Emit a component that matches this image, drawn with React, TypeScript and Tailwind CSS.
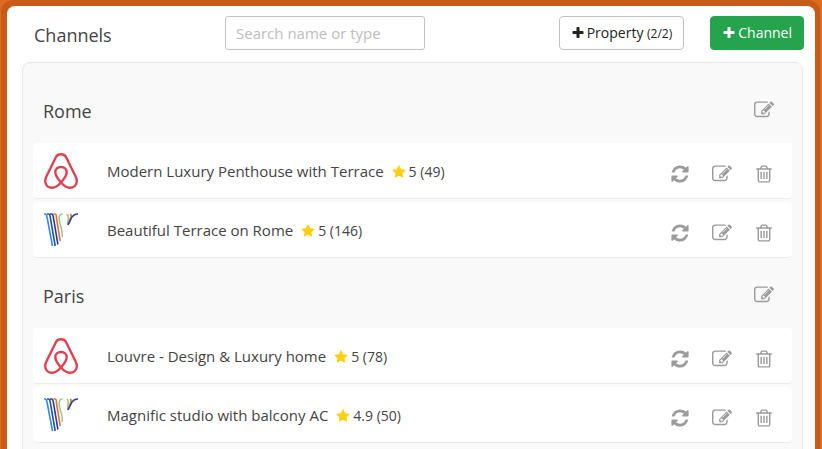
import type { ReactNode } from "react";

const glyphs = {
  plus: "M1600 736v192q0 40-28 68t-68 28h-416v416q0 40-28 68t-68 28h-192q-40 0-68-28t-28-68v-416h-416q-40 0-68-28t-28-68v-192q0-40 28-68t68-28h416v-416q0-40 28-68t68-28h192q40 0 68 28t28 68v416h416q40 0 68 28t28 68z",
  star: "M1728 647q0 22-26 48l-363 354 86 500q1 7 1 20 0 21-10.500 35.500t-30.500 14.500q-19 0-40-12l-449-236-449 236q-22 12-40 12-21 0-31.500-14.500t-10.500-35.500q0-6 2-20l86-500-364-354q-25-27-25-48 0-37 56-46l502-73 225-455q19-41 49-41t49 41l225 455 502 73q56 9 56 46z",
  refresh:
    "M1639 1056q0 5-1 7-64 268-268 434.500t-478 166.500q-146 0-282.500-55t-243.500-157l-129 129q-19 19-45 19t-45-19-19-45v-448q0-26 19-45t45-19h448q26 0 45 19t19 45-19 45l-137 137q71 66 161 102t187 36q134 0 250-65t186-179q11-17 53-117 8-23 30-23h192q13 0 22.500 9.500t9.500 22.500zm25-800v448q0 26-19 45t-45 19h-448q-26 0-45-19t-19-45 19-45l138-138q-148-137-349-137-134 0-250 65t-186 179q-11 17-53 117-8 23-30 23h-199q-13 0-22.500-9.500t-9.500-22.500v-7q65-268 270-434.500t480-166.500q146 0 284 55.500t245 156.500l130-129q19-19 45-19t45 19 19 45z",
  edit: "M888 1184l116-116-152-152-116 116v56h96v96h56zm440-720q-16-16-33 1l-350 350q-17 17-1 33t33-1l350-350q17-17 1-33zm80 594v190q0 119-84.500 203.500t-203.500 84.500h-832q-119 0-203.500-84.500t-84.500-203.500v-832q0-119 84.500-203.500t203.500-84.500h832q63 0 117 25 15 7 18 23 3 17-9 29l-49 49q-14 14-32 8-23-6-45-6h-832q-66 0-113 47t-47 113v832q0 66 47 113t113 47h832q66 0 113-47t47-113v-126q0-13 9-22l64-64q15-15 35-7t20 29zm-96-738l288 288-672 672h-288v-288zm444 132l-92 92-288-288 92-92q28-28 68-28t68 28l152 152q28 28 28 68t-28 68z",
  trash:
    "M704 736v576q0 14-9 23t-23 9h-64q-14 0-23-9t-9-23v-576q0-14 9-23t23-9h64q14 0 23 9t9 23zm256 0v576q0 14-9 23t-23 9h-64q-14 0-23-9t-9-23v-576q0-14 9-23t23-9h64q14 0 23 9t9 23zm256 0v576q0 14-9 23t-23 9h-64q-14 0-23-9t-9-23v-576q0-14 9-23t23-9h64q14 0 23 9t9 23zm128 724v-948h-896v948q0 22 7 40.500t14.500 27 10.500 8.500h832q3 0 10.500-8.500t14.500-27 7-40.500zm-672-1076h448l-48-117q-7-9-17-11h-317q-10 2-17 11zm928 32v64q0 14-9 23t-23 9h-96v948q0 83-47 143.500t-113 60.500h-832q-66 0-113-58.500t-47-141.500v-952h-96q-14 0-23-9t-9-23v-64q0-14 9-23t23-9h309l70-167q15-37 54-63t79-26h320q40 0 79 26t54 63l70 167h309q14 0 23 9t9 23z",
};

function Glyph({ name, className }: { name: keyof typeof glyphs; className: string }) {
  return (
    <svg viewBox="0 0 1792 1792" fill="currentColor" aria-hidden="true" className={className}>
      <path d={glyphs[name]} />
    </svg>
  );
}

function AirbnbLogo() {
  return (
    <svg viewBox="0 0 34 36" fill="none" stroke="#e04150" strokeWidth="2.4" aria-hidden="true" className="h-9 w-[34px]">
      <path d="M17 29.500C13 25 11.300 22 11.300 19.300C11.300 16 13.700 14 17 14s5.700 2 5.700 5.300C22.700 22 21 25 17 29.500C13.500 33.300 11 34.800 8.300 34.800C4 34.800 1.200 32 1.200 28C1.200 26.500 1.700 25 2.500 23.300L12 4C13 2.200 14.600 1.300 17 1.300s4 .9 5 2.700L31.500 23.300C32.300 25 32.800 26.500 32.800 28C32.800 32 30 34.800 25.700 34.800C23 34.800 20.500 33.300 17 29.500z" />
    </svg>
  );
}

function VrboLogo() {
  return (
    <svg viewBox="0 0 34 34" fill="none" strokeWidth="1.6" aria-hidden="true" className="h-[34px] w-[34px]">
      <path d="M0 1h1Q2.500 1 3 4L8.500 33" stroke="#3488ea" />
      <path d="M3 1h1.500Q5.800 1 6.200 4L11.200 33" stroke="#2350a0" />
      <path d="M6 1h1.500Q8.900 1 9.300 4L13.900 31.500" stroke="#22408f" />
      <path d="M9.500 1h1.500Q12.400 1 12.300 4L16.200 28" stroke="#f06a3c" />
      <path d="M18.500 1Q14.900 1 15.100 6Q15.500 10 17 14T18.200 24" stroke="#93cc8c" />
      <path d="M22.500 1.200q2.300.3 1.700 4.800l-.6 5" stroke="#93cc8c" />
      <path d="M26 1.200q1.800.5.800 3.300L24 12" stroke="#ee6338" />
      <path d="M34 1Q30 1 28 4L24 12" stroke="#2b4a96" />
    </svg>
  );
}

function IconButton({ label, children }: { label: string; children: ReactNode }) {
  return (
    <button type="button" aria-label={label} className="h-5 w-5 text-[#9b9b9b]">
      {children}
    </button>
  );
}

type Listing = { site: "airbnb" | "vrbo"; name: string; rating: string; reviews: number };

const properties: { city: string; listings: Listing[] }[] = [
  {
    city: "Rome",
    listings: [
      { site: "airbnb", name: "Modern Luxury Penthouse with Terrace", rating: "5", reviews: 49 },
      { site: "vrbo", name: "Beautiful Terrace on Rome", rating: "5", reviews: 146 },
    ],
  },
  {
    city: "Paris",
    listings: [
      { site: "airbnb", name: "Louvre - Design & Luxury home", rating: "5", reviews: 78 },
      { site: "vrbo", name: "Magnific studio with balcony AC", rating: "4.9", reviews: 50 },
    ],
  },
];

function ListingRow({ site, name, rating, reviews }: Listing) {
  return (
    <li className="flex h-14 items-center rounded-sm border-b border-[#ebebeb] bg-white pr-[18px] pl-[11px]">
      <span className="flex w-[63px] shrink-0">{site === "airbnb" ? <AirbnbLogo /> : <VrboLogo />}</span>
      <p className="flex grow items-baseline pt-[2px] text-[15px] leading-5">
        {name}
        <Glyph name="star" className="mr-[3px] ml-2 h-[14px] w-[14px] self-center text-[#ffcf0a]" />
        <span className="text-sm leading-5">
          {rating} ({reviews})
        </span>
      </p>
      <div className="flex gap-[22px] pt-[6px]">
        <IconButton label={`Refresh ${name}`}>
          <Glyph name="refresh" className="h-5 w-5" />
        </IconButton>
        <IconButton label={`Edit ${name}`}>
          <Glyph name="edit" className="h-5 w-5" />
        </IconButton>
        <IconButton label={`Delete ${name}`}>
          <Glyph name="trash" className="h-5 w-5" />
        </IconButton>
      </div>
    </li>
  );
}

export default function App() {
  return (
    <div className="h-screen overflow-hidden bg-[#e06b1f] font-['Open_Sans',sans-serif] text-[#444]">
      <div className="mr-[2px] ml-px rounded-t-xl bg-[#c55d18] pt-[6px] pr-[5px] pl-[6px]">
        <main className="min-h-screen rounded-t-lg bg-white pr-[11px] pl-[15px]">
          <header className="flex items-start pt-[10px] pb-3 pl-3">
            <h1 className="w-[191px] pt-[5px] text-lg leading-7">Channels</h1>
            <input
              type="text"
              aria-label="Search name or type"
              placeholder="Search name or type"
              className="h-[34px] w-[200px] rounded-[3px] border border-[#c2c2c2] px-[10px] text-[15px] placeholder:text-[#bdbdbd]"
            />
            <button
              type="button"
              className="ml-auto flex h-[34px] items-center gap-[2px] rounded border border-[#c2c2c2] px-[11px] text-sm text-[#222]"
            >
              <Glyph name="plus" className="h-[14px] w-[14px]" />
              <span>
                Property <small className="text-xs">(2/2)</small>
              </span>
            </button>
            <button
              type="button"
              className="ml-[26px] flex h-[34px] items-center gap-[2px] rounded border border-[#22a84b] bg-[#26a34d] px-[11px] text-sm text-white"
            >
              <Glyph name="plus" className="h-[14px] w-[14px]" />
              Channel
            </button>
          </header>
          <div className="mr-px min-h-screen rounded-lg border border-[#e8e8e8] bg-[#f9f9f9] px-[10px] pt-[10px]">
            {properties.map(({ city, listings }) => (
              <section key={city}>
                <div className="flex h-[70px] items-center justify-between pt-1 pr-[18px] pl-[10px]">
                  <h2 className="pt-[2px] text-lg leading-7">{city}</h2>
                  <IconButton label={`Edit ${city}`}>
                    <Glyph name="edit" className="h-5 w-5" />
                  </IconButton>
                </div>
                <ul className="flex flex-col gap-[3px]">
                  {listings.map((listing) => (
                    <ListingRow key={listing.name} {...listing} />
                  ))}
                </ul>
              </section>
            ))}
          </div>
        </main>
      </div>
    </div>
  );
}
